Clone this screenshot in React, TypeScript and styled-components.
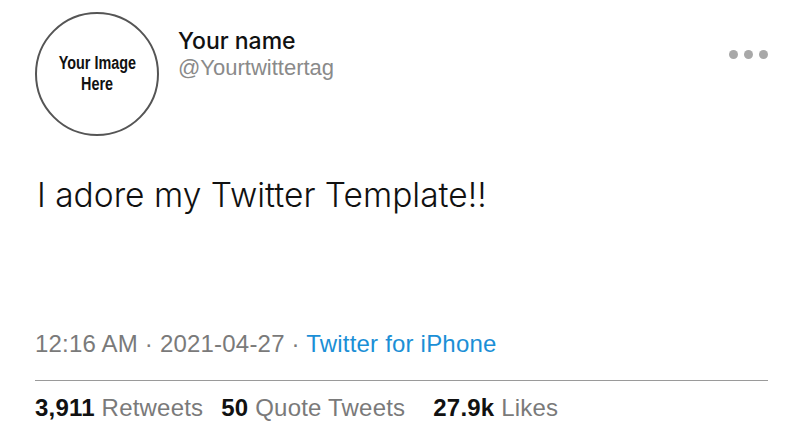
import styled, { createGlobalStyle } from 'styled-components';

const GlobalStyle = createGlobalStyle`
  html, body {
    margin: 0;
    padding: 0;
    background: #ffffff;
  }
  body {
    font-family: 'Liberation Sans', Arial, sans-serif;
    color: #111111;
  }
`;

const Card = styled.div`
  width: 794px;
  height: 441px;
  box-sizing: border-box;
  padding: 12px 26px 0 35px;
  overflow: hidden;
`;

const Header = styled.div`
  display: flex;
  align-items: flex-start;
`;

const Avatar = styled.div`
  width: 124px;
  height: 124px;
  box-sizing: border-box;
  border: 2px solid #555555;
  border-radius: 50%;
  display: flex;
  flex-direction: column;
  align-items: center;
  justify-content: center;
  flex-shrink: 0;
  font-family: 'Liberation Sans', sans-serif;
  font-weight: bold;
  font-size: 18px;
  line-height: 21px;
  color: #111111;
  padding-bottom: 1px;
`;

const AvatarLine = styled.span`
  display: block;
  transform: scaleX(0.8);
  white-space: nowrap;
`;

const UserInfo = styled.div`
  flex: 1;
  padding-left: 19px;
  padding-top: 16px;
`;

const Name = styled.div`
  font-family: Inter, 'Liberation Sans', sans-serif;
  font-size: 23px;
  font-weight: 500;
  line-height: 26px;
  color: #111111;
`;

const Handle = styled.div`
  font-size: 22px;
  line-height: 27px;
  color: #8a8a8a;
`;

const More = styled.div`
  display: flex;
  gap: 6px;
  padding-top: 38px;
`;

const Dot = styled.span`
  width: 9px;
  height: 9px;
  border-radius: 50%;
  background: #a8a8a8;
`;

const TweetText = styled.p`
  margin: 39px 0 0 2px;
  font-family: Inter, 'Liberation Sans', sans-serif;
  font-size: 33.5px;
  font-weight: 300;
  line-height: 40px;
  color: #111111;
`;

const Meta = styled.div`
  margin-top: 115px;
  font-size: 24px;
  letter-spacing: 0.2px;
  line-height: 28px;
  color: #7a7a7a;
`;

const Source = styled.span`
  color: #1b8fd6;
`;

const Divider = styled.hr`
  margin: 22px 0 0;
  border: none;
  border-top: 1px solid #9a9a9a;
  width: 733px;
`;

const Stats = styled.div`
  display: flex;
  margin-top: 13px;
  font-size: 24px;
  letter-spacing: 0.2px;
  line-height: 28px;
  color: #7a7a7a;
`;

const Stat = styled.span<{ $gap?: number }>`
  margin-left: ${(p) => p.$gap ?? 0}px;
  b {
    color: #111111;
    font-weight: bold;
  }
`;

export default function App() {
  return (
    <>
      <GlobalStyle />
      <Card>
        <Header>
          <Avatar>
            <AvatarLine>Your Image</AvatarLine>
            <AvatarLine>Here</AvatarLine>
          </Avatar>
          <UserInfo>
            <Name>Your name</Name>
            <Handle>@Yourtwittertag</Handle>
          </UserInfo>
          <More>
            <Dot />
            <Dot />
            <Dot />
          </More>
        </Header>
        <TweetText>I adore my Twitter Template!!</TweetText>
        <Meta>
          12:16 AM · 2021-04-27 · <Source>Twitter for iPhone</Source>
        </Meta>
        <Divider />
        <Stats>
          <Stat>
            <b>3,911</b> Retweets
          </Stat>
          <Stat $gap={18}>
            <b>50</b> Quote Tweets
          </Stat>
          <Stat $gap={28}>
            <b>27.9k</b> Likes
          </Stat>
        </Stats>
      </Card>
    </>
  );
}
